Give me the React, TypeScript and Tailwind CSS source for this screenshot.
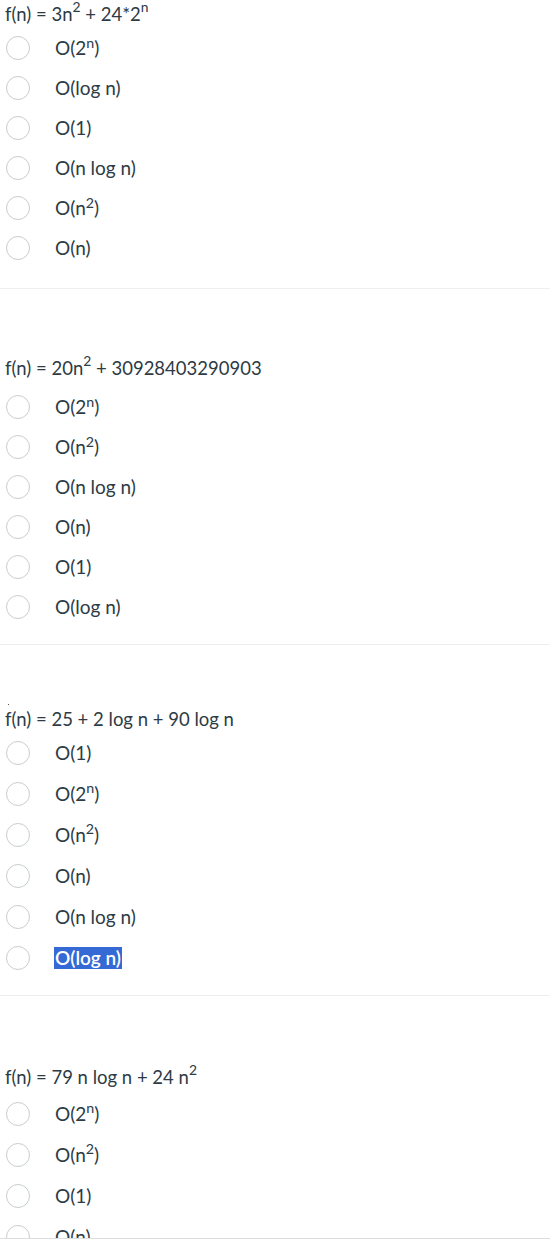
import React from "react";

type Option = { label: React.ReactNode; selected?: boolean };

type Question = {
  title: React.ReactNode;
  options: Option[];
  pt: string;
  gap: string;
  rowH: string;
  pb: string;
  dot?: boolean;
};

const n2 = (
  <>
    O(n<sup>2</sup>)
  </>
);
const twoN = (
  <>
    O(2<sup>n</sup>)
  </>
);

const questions: Question[] = [
  {
    title: (
      <>
        f(n) = 3n<sup>2</sup>&nbsp;+ 24*2<sup>n</sup>
      </>
    ),
    options: [
      { label: twoN },
      { label: "O(log n)" },
      { label: "O(1)" },
      { label: "O(n log n)" },
      { label: n2 },
      { label: "O(n)" },
    ],
    pt: "pt-0",
    gap: "mt-0",
    rowH: "h-[40px]",
    pb: "pb-[20px]",
  },
  {
    title: (
      <>
        f(n) = 20n<sup>2</sup>&nbsp;+ 30928403290903
      </>
    ),
    options: [
      { label: twoN },
      { label: n2 },
      { label: "O(n log n)" },
      { label: "O(n)" },
      { label: "O(1)" },
      { label: "O(log n)" },
    ],
    pt: "pt-[65px]",
    gap: "mt-[5px]",
    rowH: "h-[40px]",
    pb: "pb-[17px]",
  },
  {
    title: "f(n) = 25 + 2 log n + 90 log n",
    options: [
      { label: "O(1)" },
      { label: twoN },
      { label: n2 },
      { label: "O(n)" },
      { label: "O(n log n)" },
      { label: "O(log n)", selected: true },
    ],
    pt: "pt-[60px]",
    gap: "-mt-px",
    rowH: "h-[41px]",
    pb: "pb-[17px]",
    dot: true,
  },
  {
    title: (
      <>
        f(n) = 79 n log n + 24 n<sup>2</sup>
      </>
    ),
    options: [
      { label: twoN },
      { label: n2 },
      { label: "O(1)" },
      { label: "O(n)" },
      { label: "O(log n)" },
      { label: "O(n log n)" },
    ],
    pt: "pt-[67px]",
    gap: "mt-[2px]",
    rowH: "h-[41px]",
    pb: "pb-[20px]",
  },
];

function QuestionBlock({ q }: { q: Question }) {
  return (
    <div className={`relative border-b border-[#eeeeee] ${q.pt} ${q.pb}`}>
      {q.dot && <div className="absolute left-[8px] top-[59px] h-[1px] w-[1px] bg-[#555]" />}
      <div className="flex h-[28px] items-center pl-[5px] text-[18.5px]">{q.title}</div>
      <div className={q.gap}>
        {q.options.map((opt, i) => (
          <div key={i} className={`flex items-center ${q.rowH}`}>
            <div className="ml-[6px] h-[24px] w-[24px] shrink-0 rounded-full border border-[#c7cdd1] bg-white" />
            <span
              className={
                opt.selected
                  ? "ml-[24px] bg-[#3569d4] px-px font-semibold text-white"
                  : "ml-[25px]"
              }
            >
              {opt.label}
            </span>
          </div>
        ))}
      </div>
    </div>
  );
}

export default function App() {
  return (
    <div className="min-h-screen bg-white text-[19px] leading-[22px] text-[#2d3b45] font-['Lato','Open_Sans',sans-serif]">
      {questions.map((q, i) => (
        <QuestionBlock key={i} q={q} />
      ))}
      <div className="fixed bottom-0 left-0 right-0 h-[5px] border-t border-[#dddddd] bg-white" />
    </div>
  );
}
